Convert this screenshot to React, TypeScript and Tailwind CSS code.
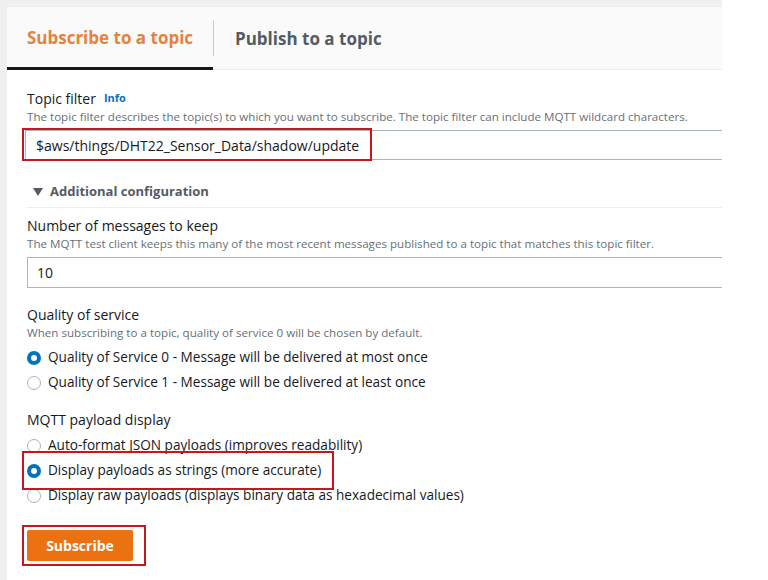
const font = { fontFamily: '"Open Sans", "Noto Sans", Arial, sans-serif' };

function Radio({ label, checked }: { label: string; checked?: boolean }) {
  return (
    <div className="flex items-center h-[25px]">
      {checked ? (
        <span className="w-[14px] h-[14px] rounded-full bg-[#0073bb] flex items-center justify-center shrink-0">
          <span className="w-[6px] h-[6px] rounded-full bg-white" />
        </span>
      ) : (
        <span className="w-[14px] h-[14px] rounded-full border border-[#aab7b8] bg-white shrink-0" />
      )}
      <span className="ml-[7px] text-[13.6px] text-[#16191f]">{label}</span>
    </div>
  );
}

function Field({ label, desc, children }: { label: React.ReactNode; desc: string; children?: React.ReactNode }) {
  return (
    <div>
      <div className="h-[20px] flex items-center text-[14px] text-[#16191f]">{label}</div>
      <div className="h-[18px] flex items-center text-[11.6px] text-[#687078]">{desc}</div>
      {children}
    </div>
  );
}

export default function App() {
  return (
    <div className="w-[768px] h-[580px] bg-white overflow-hidden" style={font}>
      <div className="w-[722px] h-full bg-[#efefef] pt-[7px] pl-[7px]">
        <div className="bg-white h-full">
          {/* tabs */}
          <div className="h-[63px] bg-[#fafafa] border-b border-[#eaeded] flex items-stretch">
            <div className="w-[206px] flex items-center justify-center border-b-[3px] border-[#16191f] -mb-px">
              <span className="text-[17px] font-bold text-[#e4823f] mt-[2px]">Subscribe to a topic</span>
            </div>
            <div className="w-px bg-[#c9cccc] my-[13px]" />
            <div className="flex items-center pl-[21px]">
              <span className="text-[17px] font-bold text-[#545b64] mt-[2px]">Publish to a topic</span>
            </div>
          </div>

          <div className="pl-[20px]">
            <div className="pt-[18px]">
              <Field
                label={
                  <>
                    Topic filter
                    <span className="ml-[8px] text-[11px] font-bold text-[#0073bb]">Info</span>
                  </>
                }
                desc="The topic filter describes the topic(s) to which you want to subscribe. The topic filter can include MQTT wildcard characters."
              >
                <div className="relative mt-[4px] -ml-[2px]">
                  <div className="h-[30px] border border-[#aab7b8] border-r-0 flex items-center pl-[10px] text-[14px] text-[#16191f]">
                    $aws/things/DHT22_Sensor_Data/shadow/update
                  </div>
                  <div className="absolute -left-[3px] -top-[2px] w-[350px] h-[33px] border-2 border-[#c8161d]" />
                </div>
              </Field>
            </div>

            <div className="mt-[21px] h-[22px] flex items-center pl-[6px] text-[13px] font-bold text-[#545b64]">
              <svg width="10" height="8" viewBox="0 0 10 8" className="mr-[7px]">
                <path d="M0 0 L10 0 L5 8 Z" fill="#545b64" />
              </svg>
              Additional configuration
            </div>
            <div className="mt-[4px] h-px bg-[#eaeded]" />

            <div className="mt-[7px]">
              <Field
                label="Number of messages to keep"
                desc="The MQTT test client keeps this many of the most recent messages published to a topic that matches this topic filter."
              >
                <div className="mt-[4px] h-[31px] border border-[#aab7b8] border-r-0 flex items-center pl-[9px] text-[14px] text-[#16191f]">
                  10
                </div>
              </Field>
            </div>

            <div className="mt-[16px]">
              <Field
                label="Quality of service"
                desc="When subscribing to a topic, quality of service 0 will be chosen by default."
              >
                <div className="mt-[3px]">
                  <Radio checked label="Quality of Service 0 - Message will be delivered at most once" />
                  <Radio label="Quality of Service 1 - Message will be delivered at least once" />
                </div>
              </Field>
            </div>

            <div className="mt-[14px]">
              <div className="h-[20px] flex items-center text-[14px] text-[#16191f]">MQTT payload display</div>
              <div className="relative mt-[4px]">
                <Radio label="Auto-format JSON payloads (improves readability)" />
                <Radio checked label="Display payloads as strings (more accurate)" />
                <Radio label="Display raw payloads (displays binary data as hexadecimal values)" />
                <div className="absolute -left-[5px] top-[18px] w-[312px] h-[39px] border-2 border-[#c8161d]" />
              </div>
            </div>

            <div className="mt-[22px] relative w-fit">
              <button className="w-[106px] h-[31px] bg-[#ec7211] text-white text-[14px] font-bold rounded-[2px]">
                Subscribe
              </button>
              <div className="absolute -left-[5px] -top-[5px] w-[124px] h-[41px] border-2 border-[#c8161d]" />
            </div>
          </div>
        </div>
      </div>
    </div>
  );
}
